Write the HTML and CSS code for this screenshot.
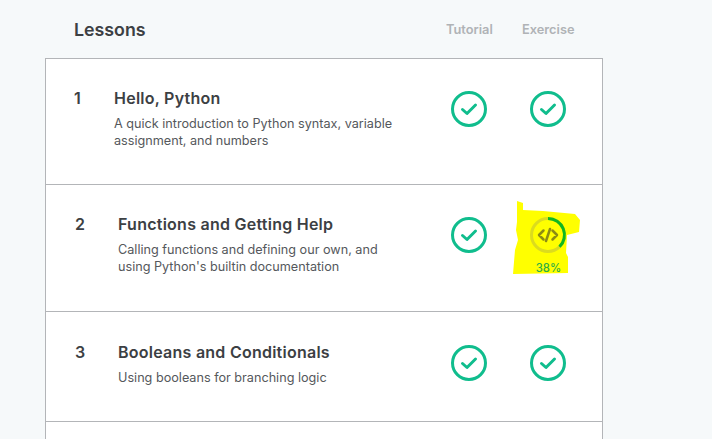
FILE: index.html
```html
<!DOCTYPE html>
<html lang="en">
<head>
<meta charset="utf-8">
<title>Lessons</title>
<link rel="stylesheet" href="styles.css">
</head>
<body>
<main class="page">
  <header class="head">
    <h2 class="head-title">Lessons</h2>
    <span class="head-col">Tutorial</span>
    <span class="head-col">Exercise</span>
  </header>
  <section class="table">
    <article class="row row-one">
      <div class="num">1</div>
      <div class="info">
        <h3 class="title">Hello, Python</h3>
        <p class="desc">A quick introduction to Python syntax, variable assignment, and numbers</p>
      </div>
      <div class="status">
        <svg class="check" viewBox="0 0 38 38"><circle cx="19" cy="19" r="16.500" /><path d="M12.500 19.500l4.500 4L25.500 15" /></svg>
      </div>
      <div class="status">
        <svg class="check" viewBox="0 0 38 38"><circle cx="19" cy="19" r="16.500" /><path d="M12.500 19.500l4.500 4L25.500 15" /></svg>
      </div>
    </article>
    <article class="row row-two">
      <div class="num">2</div>
      <div class="info">
        <h3 class="title">Functions and Getting Help</h3>
        <p class="desc">Calling functions and defining our own, and using Python's builtin documentation</p>
      </div>
      <div class="status">
        <svg class="check" viewBox="0 0 38 38"><circle cx="19" cy="19" r="16.500" /><path d="M12.500 19.500l4.500 4L25.500 15" /></svg>
      </div>
      <div class="status status-progress">
        <svg class="marker" viewBox="0 0 70 80"><path d="M4 1L10 3L10 10L30 11L62 14L67 20L66 32L54 35L53 53L55 57L55 73L0 74L2 50L5 40L3 30L4 22Z" /></svg>
        <svg class="progress" viewBox="0 0 38 38">
          <circle class="track" cx="19" cy="19" r="16.500" />
          <path class="arc" d="M19 2.500a16.500 16.500 0 0 1 11.500 28.300" />
          <path class="code" d="M14.500 14.500L10 19l4.500 4.500M23.500 14.500L28 19l-4.500 4.500M21 13l-4 12" />
        </svg>
        <span class="pct">38%</span>
      </div>
    </article>
    <article class="row row-three">
      <div class="num">3</div>
      <div class="info">
        <h3 class="title">Booleans and Conditionals</h3>
        <p class="desc">Using booleans for branching logic</p>
      </div>
      <div class="status">
        <svg class="check" viewBox="0 0 38 38"><circle cx="19" cy="19" r="16.500" /><path d="M12.500 19.500l4.500 4L25.500 15" /></svg>
      </div>
      <div class="status">
        <svg class="check" viewBox="0 0 38 38"><circle cx="19" cy="19" r="16.500" /><path d="M12.500 19.500l4.500 4L25.500 15" /></svg>
      </div>
    </article>
    <article class="row row-four"></article>
  </section>
</main>
</body>
</html>
```
FILE: styles.css
```css
html, body {
  margin: 0;
  height: 439px;
  overflow: hidden;
  background: #f6f9fa;
}
body {
  font-family: Inter, "Liberation Sans", sans-serif;
  color: #3c4043;
}
.page {
  width: 558px;
  margin-left: 45px;
}
.head {
  display: flex;
  align-items: center;
  height: 58px;
  padding-left: 29px;
  box-sizing: border-box;
}
.head-title {
  margin: 0;
  width: 372px;
  font-size: 17.800px;
  font-weight: 600;
  color: #3c4043;
}
.head-col {
  width: 76px;
  font-size: 12.800px;
  font-weight: 600;
  color: #b0b3b6;
}
.table {
  background: #fff;
  border: 1px solid #b3b5b8;
  border-bottom: 0;
  box-sizing: border-box;
}
.row {
  display: flex;
  border-bottom: 1px solid #b3b5b8;
  box-sizing: border-box;
}
.row-one { height: 126px; padding: 28px 0 0 28px; }
.row-two { height: 127px; padding: 28px 0 0 29px; }
.row-three { height: 110px; padding: 29px 0 0 29px; }
.row-four { height: 40px; border-bottom: 0; }
.num {
  width: 40px;
  font-size: 16px;
  font-weight: 600;
  line-height: 22px;
}
.row-two .num, .row-three .num { width: 43px; }
.info { width: 315px; }
.row-two .info, .row-three .info { width: 311px; }
.title {
  margin: 0 0 7px;
  font-size: 16px;
  font-weight: 600;
  line-height: 22px;
  letter-spacing: 0.250px;
}
.desc {
  margin: 0;
  font-size: 12.650px;
  line-height: 16.500px;
  color: #55585c;
  width: 290px;
}
.row-two .desc { width: 270px; }
.status {
  width: 79px;
  display: flex;
  flex-direction: column;
  align-items: center;
  position: relative;
  margin-top: 3px;
}
.check {
  width: 38px;
  height: 38px;
  fill: none;
  stroke: #10bd8d;
  stroke-width: 3;
}
.check path { stroke-width: 3; stroke-linecap: round; stroke-linejoin: round; }
.marker {
  position: absolute;
  left: 4.500px;
  top: -16px;
  width: 70px;
  height: 80px;
  fill: #ffff00;
}
.progress {
  position: relative;
  width: 38px;
  height: 38px;
  fill: none;
}
.track { stroke: #dcdc1e; stroke-width: 3; }
.arc { stroke: #10b820; stroke-width: 3; }
.code { stroke: #8c8c14; stroke-width: 2.500; stroke-linecap: round; stroke-linejoin: round; }
.pct {
  position: relative;
  left: 1px;
  font-size: 11.300px;
  font-weight: 500;
  color: #2cae46;
  line-height: 13px;
  margin-top: 8px;
}
```
